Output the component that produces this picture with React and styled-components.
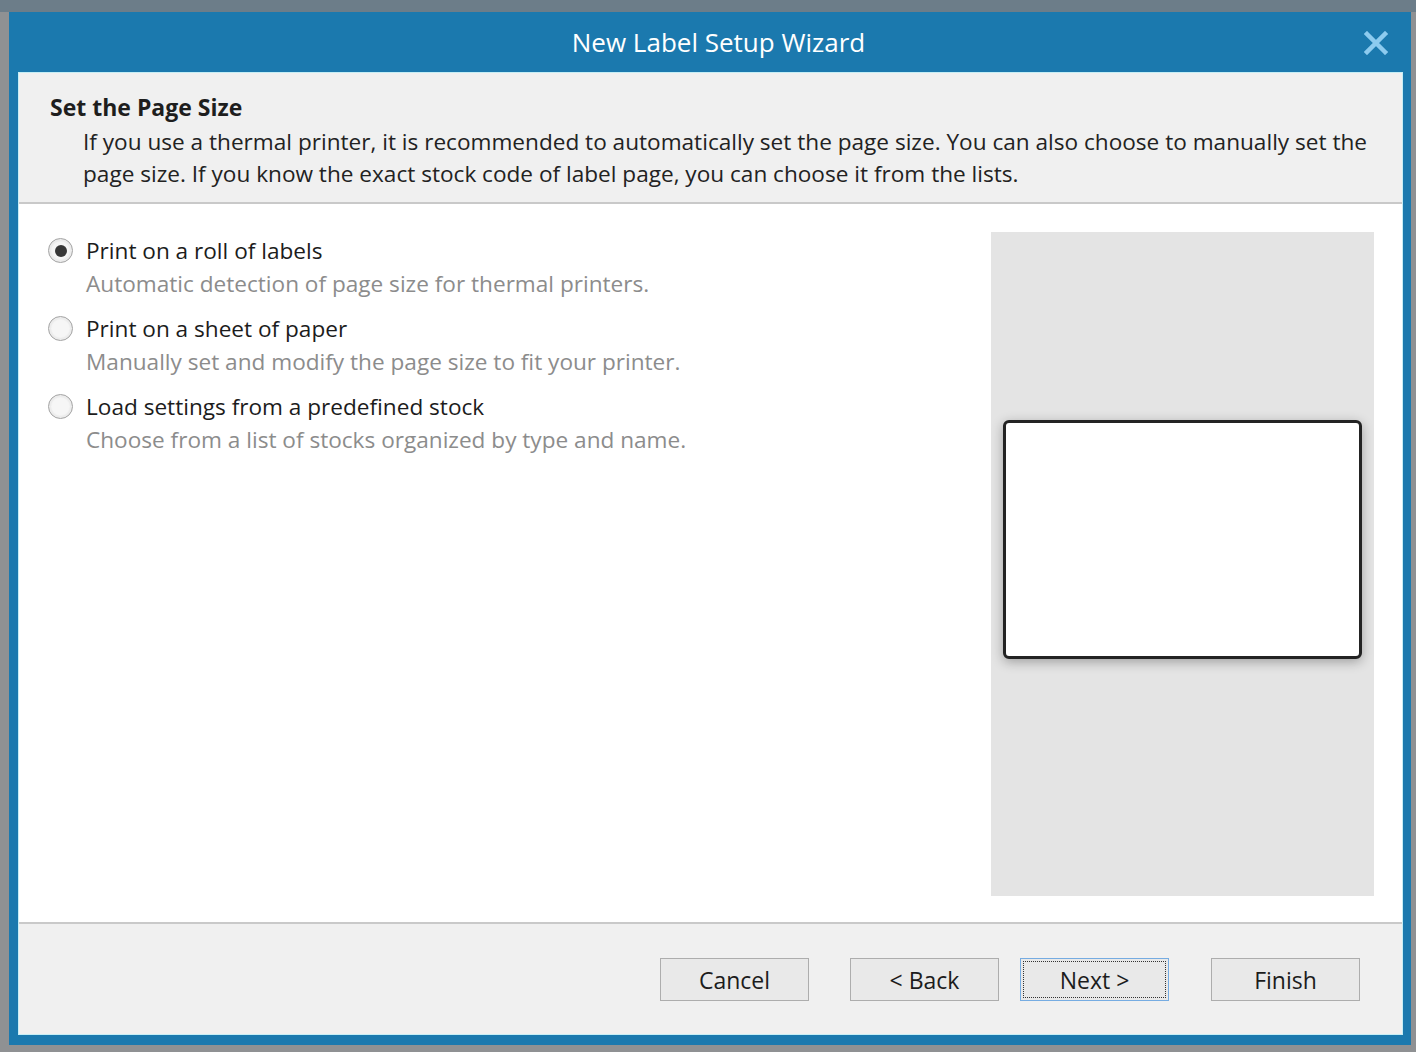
import React from 'react'
import styled, { createGlobalStyle } from 'styled-components'

const GlobalStyle = createGlobalStyle`
  html, body {
    margin: 0;
    padding: 0;
    background: #8f9193;
  }
  body {
    font-family: "Open Sans", "Noto Sans", sans-serif;
  }
`

const Desktop = styled.div`
  width: 1416px;
  height: 1052px;
  box-sizing: border-box;
  padding: 12px 5px 7px 9px;
  background: linear-gradient(#6c7d89 0 12px, #8f9193 12px);
`

const Dialog = styled.div`
  height: 100%;
  display: flex;
  flex-direction: column;
  background: #1b79ae;
  padding: 0 8px 10px 9px;
  box-sizing: border-box;
`

const TitleBar = styled.div`
  height: 60px;
  position: relative;
  display: flex;
  align-items: center;
  justify-content: center;
  color: #fff;
  font-size: 26px;
  padding-left: 16px;
`

const CloseButton = styled.button`
  position: absolute;
  right: 15px;
  top: 19px;
  width: 24px;
  height: 24px;
  padding: 0;
  border: none;
  background: none;
  display: flex;
`

const Window = styled.div`
  flex: 1;
  display: flex;
  flex-direction: column;
  border: 1px solid #c6eef5;
  background: #fff;
`

const Header = styled.div`
  background: #f0f0f0;
  padding: 16px 26px 12px 31px;
  border-bottom: 2px solid #c9c9c9;
`

const Heading = styled.div`
  font-size: 23px;
  font-weight: 700;
  line-height: 37px;
  color: #1e1e1e;
`

const Intro = styled.div`
  font-size: 22.6px;
  line-height: 32px;
  color: #222;
  padding-left: 33px;
`

const Body = styled.div`
  flex: 1;
  display: flex;
  justify-content: space-between;
  padding: 28px 28px 26px 29px;
  border-bottom: 2px solid #c9c9c9;
`

const Options = styled.div`
  display: flex;
  flex-direction: column;
  gap: 12px;
  padding-top: 2px;
`

const Option = styled.label`
  display: grid;
  grid-template-columns: 25px 1fr;
  column-gap: 13px;
  align-items: center;
`

const Radio = styled.span`
  width: 25px;
  height: 25px;
  box-sizing: border-box;
  border-radius: 50%;
  border: 1px solid #a3a3a3;
  background: radial-gradient(circle, #f6f6f6 0 50%, #dedede 100%);
  box-shadow: inset 0 0 0 2px #ececec;
  display: flex;
  align-items: center;
  justify-content: center;

  &::after {
    content: '';
    width: 12px;
    height: 12px;
    border-radius: 50%;
    background: ${p => (p.$checked ? '#383838' : 'transparent')};
  }
`

const OptionLabel = styled.span`
  font-size: 22.6px;
  line-height: 33px;
  color: #1c1c1c;
`

const OptionHint = styled.span`
  grid-column: 2;
  font-size: 22.6px;
  line-height: 33px;
  color: #8c8c8c;
`

const Preview = styled.div`
  width: 383px;
  background: #e4e4e4;
  display: flex;
  justify-content: center;
  padding-top: 188px;
  box-sizing: border-box;
`

const LabelCard = styled.div`
  width: 359px;
  height: 239px;
  box-sizing: border-box;
  background: #fff;
  border: 3px solid #232323;
  border-radius: 6px;
  box-shadow: 0 3px 12px rgba(0, 0, 0, 0.3);
`

const Footer = styled.div`
  height: 110px;
  box-sizing: border-box;
  background: #f0f0f0;
  display: flex;
  justify-content: flex-end;
  align-items: flex-start;
  padding: 34px 42px 0 0;
`

const Button = styled.button`
  width: 149px;
  height: 43px;
  margin-left: ${p => p.$gap || 41}px;
  box-sizing: border-box;
  background: #e9e9e9;
  border: 1px solid ${p => (p.$focused ? '#76ace2' : '#adadad')};
  font-family: "Open Sans", "Noto Sans", sans-serif;
  font-size: 23px;
  color: #1c1c1c;
  outline: ${p => (p.$focused ? '1px dotted #333' : 'none')};
  outline-offset: -4px;
  padding: 0;
`

const options = [
  { label: 'Print on a roll of labels', hint: 'Automatic detection of page size for thermal printers.', checked: true },
  { label: 'Print on a sheet of paper', hint: 'Manually set and modify the page size to fit your printer.' },
  { label: 'Load settings from a predefined stock', hint: 'Choose from a list of stocks organized by type and name.' },
]

export default function App() {
  return (
    <>
      <GlobalStyle />
      <Desktop>
        <Dialog>
          <TitleBar>
            New Label Setup Wizard
            <CloseButton aria-label="Close">
              <svg width="24" height="24" viewBox="0 0 24 24">
                <path d="M3 3 L21 21 M21 3 L3 21" stroke="#8dcbef" strokeWidth="4.5" strokeLinecap="square" />
              </svg>
            </CloseButton>
          </TitleBar>
          <Window>
            <Header>
              <Heading>Set the Page Size</Heading>
              <Intro>
                If you use a thermal printer, it is recommended to automatically set the page size. You can also choose to manually set the page size. If you know the exact stock code of label page, you can choose it from the lists.
              </Intro>
            </Header>
            <Body>
              <Options>
                {options.map(o => (
                  <Option key={o.label}>
                    <Radio $checked={o.checked} />
                    <OptionLabel>{o.label}</OptionLabel>
                    <OptionHint>{o.hint}</OptionHint>
                  </Option>
                ))}
              </Options>
              <Preview>
                <LabelCard />
              </Preview>
            </Body>
            <Footer>
              <Button>Cancel</Button>
              <Button>&lt; Back</Button>
              <Button $gap={21} $focused>Next &gt;</Button>
              <Button $gap={42}>Finish</Button>
            </Footer>
          </Window>
        </Dialog>
      </Desktop>
    </>
  )
}
